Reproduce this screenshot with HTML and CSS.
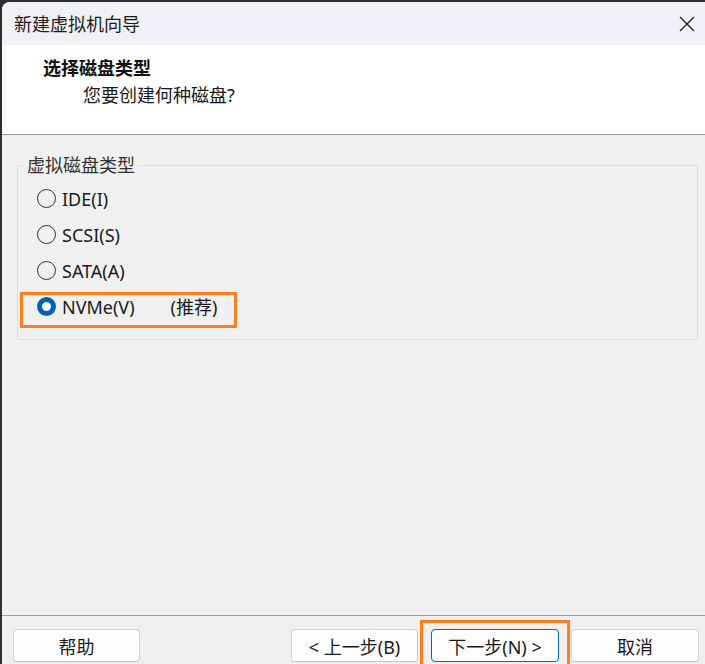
FILE: index.html
```html
<!DOCTYPE html>
<html lang="zh-CN">
<head>
    <meta charset="UTF-8">
    <meta name="viewport" content="width=device-width, initial-scale=1.0">
    <title>新建虚拟机向导</title>
    <link rel="stylesheet" href="styles.css">
</head>
<body>
    <div class="window">
        <div class="titlebar">
            <span class="title">新建虚拟机向导</span>
            <svg class="close" width="16" height="16" viewBox="0 0 16 16">
                <path d="M1 1 L15 15 M15 1 L1 15" stroke="#1b1b1b" stroke-width="1.3" fill="none"/>
            </svg>
        </div>

        <div class="header">
            <div class="heading">选择磁盘类型</div>
            <div class="subheading">您要创建何种磁盘?</div>
        </div>

        <div class="content">
            <fieldset class="group">
                <legend>虚拟磁盘类型</legend>
                <label class="option"><span class="radio"></span>IDE(I)</label>
                <label class="option"><span class="radio"></span>SCSI(S)</label>
                <label class="option"><span class="radio"></span>SATA(A)</label>
                <label class="option checked marked"><span class="radio"></span>NVMe(V)<span class="hint">(推荐)</span></label>
            </fieldset>
        </div>

        <div class="footer">
            <button class="btn help">帮助</button>
            <button class="btn prev">&lt; 上一步(B)</button>
            <span class="mark"><button class="btn primary">下一步(N) &gt;</button></span>
            <button class="btn cancel">取消</button>
        </div>
    </div>
</body>
</html>
```

FILE: styles.css
```css
body {
    margin: 0;
    background-color: #2e2e2e;
    overflow: hidden;
    font-family: 'Noto Sans', 'Noto Sans CJK SC', sans-serif;
    font-size: 18px;
    color: #1a1a1a;
}
.window {
    display: flex;
    flex-direction: column;
    height: 662px;
    margin: 2px 0 0 2px;
    background-color: #f0f0f0;
    border-top-left-radius: 8px;
    overflow: hidden;
}
.titlebar {
    display: flex;
    align-items: center;
    justify-content: space-between;
    height: 43px;
    padding: 0 10px 0 12px;
    background-color: #eff1f4;
}
.title {
    line-height: 22px;
}
.header {
    height: 90px;
    box-sizing: border-box;
    padding: 10px 0 0 41px;
    background-color: #ffffff;
    border-bottom: 1px solid #a0a0a0;
    line-height: 27px;
}
.heading {
    font-weight: bold;
    color: #111;
}
.subheading {
    padding-left: 40px;
}
.content {
    flex: 1;
}
.group {
    margin: 20px 7px 0 15px;
    padding: 9px 0 11px 2px;
    border: 1px solid #dcdcdc;
}
.group legend {
    margin-left: 4px;
    padding: 0 3px;
    line-height: 20px;
    color: #333;
}
.option {
    display: flex;
    align-items: center;
    box-sizing: border-box;
    width: 217px;
    height: 36px;
    padding: 0 0 7px 14px;
    border: 3px solid transparent;
    line-height: 22px;
}
.option.marked {
    border-color: #f58025;
}
.radio {
    box-sizing: border-box;
    width: 19px;
    height: 19px;
    margin-right: 6px;
    border: 1px solid #333;
    border-radius: 50%;
}
.option.checked .radio {
    border: 5.5px solid #005fb8;
    background-color: #ffffff;
}
.hint {
    margin-left: 36px;
}
.footer {
    display: flex;
    align-items: flex-start;
    height: 49px;
    box-sizing: border-box;
    padding: 13px 0 0 11px;
    border-top: 1px solid #a0a0a0;
}
.btn {
    width: 128px;
    height: 33px;
    padding: 0;
    background-color: #fdfdfd;
    border: 1px solid #d0d0d0;
    border-bottom-color: #c4c4c4;
    border-radius: 4px;
    font-family: inherit;
    font-size: 18px;
    color: #1a1a1a;
}
.btn.help {
    width: 127px;
}
.btn.prev {
    width: 127px;
    margin-left: 151px;
}
.btn.primary {
    border-color: #0067c0;
}
.mark {
    display: flex;
    margin: -9px 0 0 2px;
    padding: 6px 8px 12px 8px;
    border: 3px solid #f58025;
}
.btn.cancel {
    margin-left: 1px;
}
```
